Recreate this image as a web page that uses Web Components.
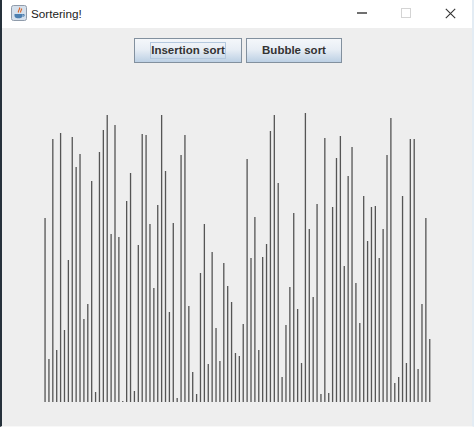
<!DOCTYPE html>
<html>
<head>
<meta charset="utf-8">
<title>Sortering!</title>
<style>
  html, body { margin: 0; padding: 0; background: #fff; }
</style>
</head>
<body>
<swing-window title="Sortering!">
  <swing-button focused style="width: 108px">Insertion sort</swing-button>
  <swing-button style="width: 96px">Bubble sort</swing-button>
  <sort-chart slot="content"></sort-chart>
</swing-window>

<script>
class SwingWindow extends HTMLElement {
    constructor() {
        super();
        this.attachShadow({ mode: "open" });
        this.shadowRoot.innerHTML = `<style>
            :host { display: flex; flex-direction: column; width: 474px; height: 427px; overflow: hidden; font-family: "Liberation Sans", Arial, sans-serif; background: #eeeeee; border-left: 2px solid #26313b; border-right: 2px solid #e3ecf4; border-bottom: 1px solid #f8f8f8; box-sizing: border-box; }
            .titlebar { display: flex; align-items: center; box-sizing: border-box; height: 28px; flex: none; background: #fff; padding: 0 0 2px 9px; }
            .icon { width: 16px; height: 16px; flex: none; }
            .title { font-size: 11.7px; color: #222; margin-left: 4px; flex: 1; }
            .controls { display: flex; height: 100%; }
            .controls span { width: 44px; display: flex; align-items: center; justify-content: center; }
            .buttons { display: flex; justify-content: center; gap: 4px; padding: 10px 0 0 2px; flex: none; }
            .content { flex: 1; min-height: 0; }
        </style>
        <div class="titlebar">
            <svg class="icon" viewBox="0 0 16 16">
                <rect x=".5" y=".5" width="15" height="15" rx="2" fill="#d5e0ec" stroke="#8f9baa"/>
                <path d="M8.5 2.5c1 2-2 3-1 5M10.5 3.5c.6 1.6-1.6 2.4-.8 4" fill="none" stroke="#d9662b" stroke-width="1.2"/>
                <path d="M3.5 9h8v2.2a3 3 0 0 1-3 2h-2a3 3 0 0 1-3-2z" fill="#4c7fb0"/>
                <path d="M11.5 9.5h1.6v1.6h-1.6" fill="none" stroke="#4c7fb0"/>
            </svg>
            <span class="title"></span>
            <div class="controls">
                <span><svg width="10" height="10" viewBox="0 0 10 10"><path d="M0 5h10" stroke="#222" stroke-width="1.3"/></svg></span>
                <span><svg width="10" height="10" viewBox="0 0 10 10"><rect x=".5" y=".5" width="9" height="9" fill="none" stroke="#d4d4d4"/></svg></span>
                <span><svg width="11" height="11" viewBox="0 0 11 11"><path d="M.8.8l9.4 9.4M10.2.8L.8 10.2" stroke="#333" stroke-width="1.1"/></svg></span>
            </div>
        </div>
        <div class="buttons"><slot></slot></div>
        <div class="content"><slot name="content"></slot></div>`;
    }

    connectedCallback() {
        this.shadowRoot.querySelector(".title").textContent = this.getAttribute("title") || "";
    }
}

class SwingButton extends HTMLElement {
    constructor() {
        super();
        this.attachShadow({ mode: "open" });
        this.shadowRoot.innerHTML = `<style>
            :host { display: flex; align-items: center; justify-content: center; box-sizing: border-box; height: 25px; border: 1px solid #82909e; background: linear-gradient(#f4f7fa 0%, #e8eef5 45%, #bcd0e4 100%); font-size: 11.5px; font-weight: bold; color: #333; }
            span { display: block; line-height: 13px; padding: 1px 0; border: 1px solid transparent; }
            :host([focused]) span { border-color: #b4c8de; }
        </style>
        <span><slot></slot></span>`;
    }
}

// tops of the bars, read left to right
const BAR_TOPS = [
    218, 359, 139, 350, 133, 330, 260, 137, 167, 154,
    319, 304, 181, 392, 152, 130, 115, 234, 125, 237,
    401, 201, 173, 391, 245, 134, 135, 224, 288, 205,
    115, 171, 312, 223, 398, 155, 135, 306, 372, 394,
    273, 224, 364, 252, 328, 361, 263, 286, 302, 353,
    356, 324, 159, 258, 217, 350, 257, 244, 131, 115,
    183, 377, 325, 287, 213, 309, 363, 113, 229, 297,
    204, 394, 138, 393, 207, 158, 136, 266, 176, 147,
    283, 323, 196, 241, 207, 206, 258, 229, 155, 118,
    383, 377, 196, 363, 139, 139, 369, 304, 218, 339
];

class SortChart extends HTMLElement {
    constructor() {
        super();
        this.attachShadow({ mode: "open" });
        const offsetTop = 63;
        const bottom = 402 - offsetTop;
        const step = (429.7 - 45) / (BAR_TOPS.length - 1);
        const bars = BAR_TOPS.map((top, i) => {
            const x = (43 + step * i - 0.6).toFixed(2);
            return `<rect x="${x}" y="${top - offsetTop}" width="1.3" height="${bottom - top + offsetTop}"/>`;
        }).join("");
        this.shadowRoot.innerHTML = `<style>
            :host { display: block; height: 100%; }
            svg { display: block; width: 100%; height: 100%; }
            rect { fill: #555; }
        </style>
        <svg>${bars}</svg>`;
    }
}

customElements.define("swing-window", SwingWindow);
customElements.define("swing-button", SwingButton);
customElements.define("sort-chart", SortChart);
</script>
</body>
</html>
